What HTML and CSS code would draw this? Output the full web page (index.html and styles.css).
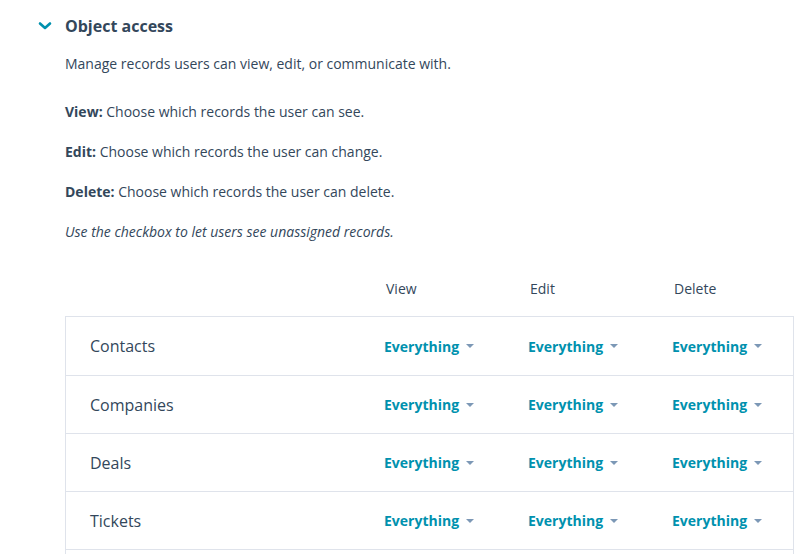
FILE: index.html
```html
<!DOCTYPE html>
<html>
<head>
<meta charset="utf-8">
<link rel="stylesheet" href="styles.css">
</head>
<body>
<section class="panel">
  <div class="head">
    <svg class="chev" width="14" height="10" viewBox="0 0 14 10"><path d="M2 2.5 L7 7 L12 2.5" fill="none" stroke="#0091ae" stroke-width="2.6" stroke-linecap="round" stroke-linejoin="round"/></svg>
    <h2>Object access</h2>
  </div>
  <div class="body">
    <p class="intro">Manage records users can view, edit, or communicate with.</p>
    <p><b>View:</b> Choose which records the user can see.</p>
    <p><b>Edit:</b> Choose which records the user can change.</p>
    <p><b>Delete:</b> Choose which records the user can delete.</p>
    <p class="note">Use the checkbox to let users see unassigned records.</p>

    <div class="cols">
      <span class="spacer"></span>
      <span class="col">View</span>
      <span class="col">Edit</span>
      <span class="col">Delete</span>
    </div>
    <div class="table">
      <div class="row"><span class="label">Contacts</span><span class="dd">Everything<i class="caret"></i></span><span class="dd">Everything<i class="caret"></i></span><span class="dd">Everything<i class="caret"></i></span></div>
      <div class="row"><span class="label">Companies</span><span class="dd">Everything<i class="caret"></i></span><span class="dd">Everything<i class="caret"></i></span><span class="dd">Everything<i class="caret"></i></span></div>
      <div class="row"><span class="label">Deals</span><span class="dd">Everything<i class="caret"></i></span><span class="dd">Everything<i class="caret"></i></span><span class="dd">Everything<i class="caret"></i></span></div>
      <div class="row"><span class="label">Tickets</span><span class="dd">Everything<i class="caret"></i></span><span class="dd">Everything<i class="caret"></i></span><span class="dd">Everything<i class="caret"></i></span></div>
      <div class="row row-empty"></div>
    </div>
  </div>
</section>
</body>
</html>
```
FILE: styles.css
```css
html, body {
  margin: 0;
  padding: 0;
  background: #ffffff;
  overflow: hidden;
}
body {
  font-family: "Open Sans", "Lato", sans-serif;
  color: #33475b;
  width: 811px;
  height: 554px;
}
.panel {
  padding: 14px 0 0 38px;
}
.head {
  display: flex;
  align-items: center;
  gap: 13px;
  height: 24px;
}
.chev {
  display: block;
}
.head h2 {
  margin: 0;
  font-size: 16px;
  font-weight: 700;
  color: #33475b;
}
.body {
  padding-left: 27px;
  padding-top: 16px;
}
.body p {
  margin: 0 0 21px 0;
  font-size: 14px;
  line-height: 19px;
}
.body p.intro {
  margin-bottom: 29px;
}
.body p b {
  font-weight: 700;
}
.body p.note {
  font-style: italic;
  margin-bottom: 0;
}
.cols {
  display: grid;
  grid-template-columns: 321px 144px 144px 1fr;
  margin-top: 37px;
  height: 20px;
  align-items: center;
  font-size: 14px;
  font-weight: 400;
}
.table {
  margin-top: 18px;
  width: 727px;
  border: 1px solid #dfe3eb;
}
.row {
  display: grid;
  grid-template-columns: 318px 144px 144px 1fr;
  align-items: center;
  height: 57px;
  border-bottom: 1px solid #dfe3eb;
}
.row:first-child {
  height: 58px;
}
.label {
  padding-left: 24px;
  font-size: 16px;
  font-weight: 400;
}
.dd {
  color: #0091ae;
  font-weight: 700;
  font-size: 14px;
  display: flex;
  align-items: center;
}
.caret {
  display: inline-block;
  width: 0;
  height: 0;
  margin-left: 7px;
  border-left: 4px solid transparent;
  border-right: 4px solid transparent;
  border-top: 4px solid #7c98b6;
}
```
